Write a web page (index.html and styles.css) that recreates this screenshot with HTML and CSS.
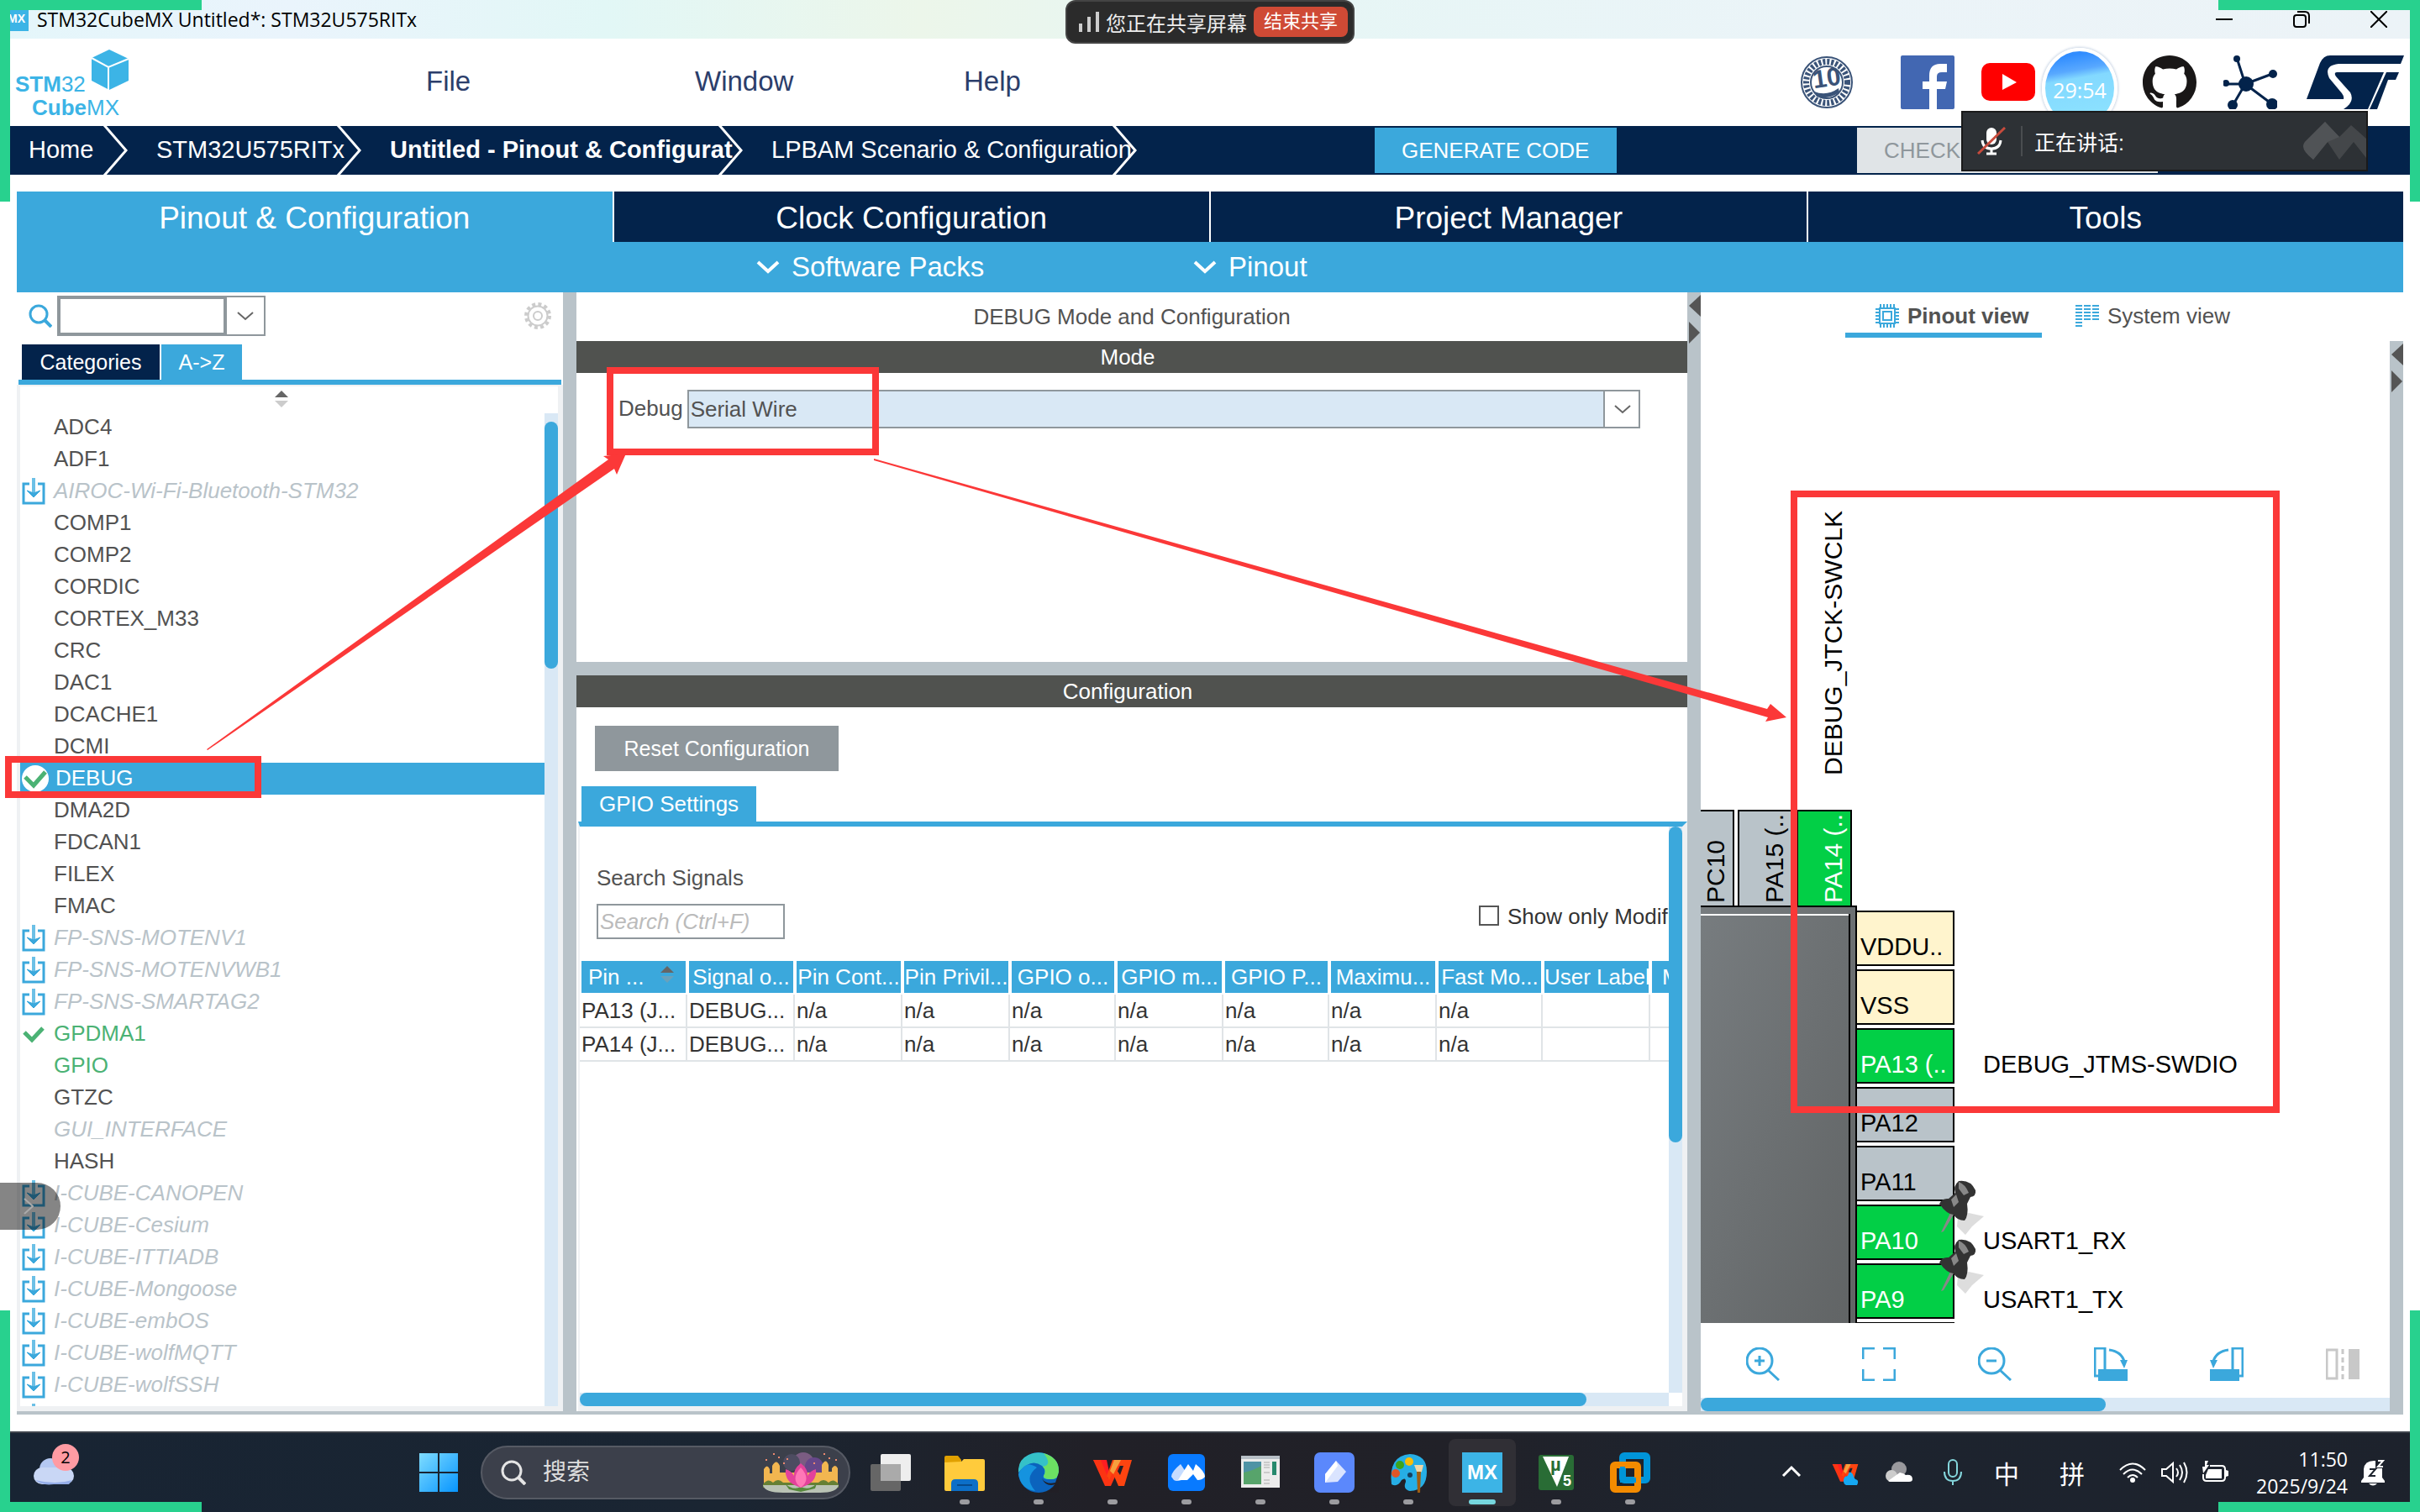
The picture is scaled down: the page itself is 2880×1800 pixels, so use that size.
FILE: index.html
```
<!DOCTYPE html>
<html lang="zh-CN">

<head>
    <meta charset="UTF-8">
    <meta name="viewport" content="width=device-width, initial-scale=1.0">
    <title>STM32CubeMX Untitled*: STM32U575RITx</title>
    <link rel="stylesheet" href="styles.css">
</head>

<body>
    <svg class="symbols" aria-hidden="true">
        <symbol id="download" viewBox="0 0 28 32">
            <path d="M9 7H2v23h24V7h-7" fill="none" stroke="#3ba8dc" stroke-width="3" />
            <path d="M14 0v20" stroke="#6cc0e6" stroke-width="4" />
            <path d="M6 15l8 8 8-8-8 3z" fill="#3ba8dc" stroke="#3ba8dc" />
        </symbol>
        <symbol id="check" viewBox="0 0 28 32">
            <path d="M3 14l9 9L25 9" fill="none" stroke="#4bb274" stroke-width="5" />
        </symbol>
        <symbol id="check-round" viewBox="0 0 32 34">
            <circle cx="16" cy="17" r="16" fill="#fff" />
            <path d="M4 15l10 10L28 9" fill="none" stroke="#4bb274" stroke-width="5" />
        </symbol>
        <symbol id="chevron" viewBox="0 0 30 58">
            <path d="M2-1l26 30L2 59" fill="none" stroke="#fff" stroke-width="3" />
        </symbol>
        <symbol id="down" viewBox="0 0 28 16">
            <path d="M2 2l12 11L26 2" fill="none" stroke="currentColor" stroke-width="4" />
        </symbol>
        <symbol id="down-thin" viewBox="0 0 20 12">
            <path d="M1 2l9 8 9-8" fill="none" stroke="#666" stroke-width="2" />
        </symbol>
        <symbol id="sort" viewBox="0 0 16 20">
            <path d="M8 0l8 8H0z" fill="#666" />
            <path d="M0 12h16l-8 8z" fill="#999" opacity=".5" />
        </symbol>
        <symbol id="split-arrows" viewBox="0 0 16 60">
            <path d="M16 0v26L2 13z" fill="#555" />
            <path d="M2 32v26l13-13z" fill="#555" />
        </symbol>
        <symbol id="pushpin" viewBox="0 0 54 66">
            <path d="M23 46l13-6 18 4-14 12-8 10-10-10z" fill="#bbb" opacity=".5" />
            <path d="M14 40l4 2-12 20-3 1z" fill="#888" />
            <path d="M24 2q14-2 20 11 1 7-6 8l-4 8q2 14-3 20-9 0-13-7-8 0-17-13 3-7 11-6l8-7q-3-8 4-14z" fill="#333" />
            <path d="M24 3q8 3 12 13l-6 3-6-8zM15 24l6-6 3 9-6 6z" fill="#888" />
        </symbol>
        <symbol id="wps" viewBox="0 0 48 48">
            <path d="M1 9h16l3 14-4 8z" fill="#ff1d22" />
            <path d="M1 9h9l9 22 8-22h9L22 40h-7z" fill="#fb3413" />
            <path d="M24 9h23l-9 31h-7l-7-16 3-6 6 9 4-11H28l-8 17-3-5z" fill="#fd4410" />
            <path d="M26 9h8l-9 17-4-4z" fill="#f6a03e" />
        </symbol>
    </svg>

    <div class="app">
        <header class="titlebar">
            <span class="app-icon">MX</span>
            <span class="title">STM32CubeMX Untitled*: STM32U575RITx</span>
            <div class="window-buttons">
                <button type="button" aria-label="Minimize"><svg viewBox="0 0 20 20"><path d="M0 10h20" stroke="#000" stroke-width="2" /></svg></button>
                <button type="button" aria-label="Restore"><svg viewBox="0 0 20 20"><rect x="1" y="5" width="14" height="14" rx="3" fill="none" stroke="#000" stroke-width="2" /><path d="M5 1h9q5 0 5 5v9" fill="none" stroke="#000" stroke-width="2" /></svg></button>
                <button type="button" aria-label="Close"><svg viewBox="0 0 20 20"><path d="M0 0l20 20M20 0L0 20" stroke="#000" stroke-width="2" /></svg></button>
            </div>
        </header>

        <nav class="menubar">
            <div class="logo">
                <div><b>STM</b>32</div>
                <div class="logo-line"><b>Cube</b>MX</div>
                <svg class="cube" viewBox="0 0 46 50">
                    <path d="M22 1L45 12v26L22 49 1 38V11z" fill="#3cb4e6" />
                    <path d="M1 11l20 11 24-10M21 22v27" fill="none" stroke="#fff" stroke-width="2" />
                </svg>
            </div>
            <div class="menus">
                <button type="button">File</button>
                <button type="button">Window</button>
                <button type="button">Help</button>
            </div>
            <div class="links">
                <a href="#" class="badge" aria-label="10 years">
                    <svg viewBox="0 0 64 64">
                        <circle cx="32" cy="32" r="30" fill="none" stroke="#3a5378" stroke-width="2" />
                        <circle cx="32" cy="32" r="24.500" fill="none" stroke="#3a5378" stroke-width="7" stroke-dasharray="3 2" />
                        <circle cx="32" cy="32" r="19" fill="none" stroke="#3a5378" stroke-width="2" />
                        <text x="16" y="37" class="ten" transform="rotate(-8 32 32)">10</text>
                        <path d="M17 43q15 6 29-4l1 5q-14 9-27 5z" fill="#3a5378" />
                    </svg>
                </a>
                <a href="#" class="facebook" aria-label="Facebook">
                    <svg viewBox="0 0 64 64">
                        <rect width="64" height="64" rx="2" fill="#4267b2" />
                        <path d="M34 64V40h-8v-9h8v-7q0-14 13-14h8v10h-6q-6 0-6 5v6h12l-2 9H43v24z" fill="#fff" />
                    </svg>
                </a>
                <a href="#" class="youtube" aria-label="YouTube">
                    <svg viewBox="0 0 64 64">
                        <rect y="9" width="64" height="45" rx="10" fill="#f00" />
                        <path d="M25 22l17 10-17 9z" fill="#fff" />
                    </svg>
                </a>
                <a href="#" class="github" aria-label="GitHub">
                    <svg viewBox="0 0 16 16">
                        <path fill="#191717" d="M8 0C3.580 0 0 3.580 0 8c0 3.540 2.290 6.530 5.470 7.590.4.070.55-.17.55-.38 0-.19-.01-.82-.01-1.490-2.010.37-2.530-.49-2.690-.94-.09-.23-.48-.94-.82-1.130-.28-.15-.68-.52-.01-.53.63-.01 1.080.58 1.230.82.72 1.210 1.870.87 2.330.66.07-.52.28-.87.51-1.070-1.780-.2-3.640-.89-3.640-3.950 0-.87.31-1.590.82-2.150-.08-.2-.36-1.020.08-2.120 0 0 .67-.21 2.200.82a7.600 7.600 0 014 0c1.530-1.040 2.200-.82 2.200-.82.44 1.100.16 1.920.08 2.120.51.56.82 1.270.82 2.150 0 3.070-1.870 3.750-3.650 3.950.29.25.54.73.54 1.480 0 1.070-.01 1.930-.01 2.200 0 .21.15.46.55.38A8 8 0 0016 8c0-4.420-3.580-8-8-8z" />
                    </svg>
                </a>
                <a href="#" class="community" aria-label="ST community">
                    <svg viewBox="0 0 64 64">
                        <path d="M26 34L16 3M26 34l32-12M26 34H3M26 34L12 58M26 34l32 24" stroke="#03234b" stroke-width="3" />
                        <g fill="#03234b">
                            <circle cx="27" cy="34" r="9" />
                            <circle cx="16" cy="4" r="4" />
                            <circle cx="59" cy="22" r="5" />
                            <circle cx="3" cy="33" r="4" />
                            <circle cx="11" cy="59" r="6" />
                            <circle cx="58" cy="58" r="7" />
                        </g>
                    </svg>
                </a>
                <a href="#" class="st" aria-label="STMicroelectronics">
                    <svg viewBox="0 0 116 64">
                        <path d="M28 0h88l-4 10H38q-18 2-11 17l15 18q3 4 2 7H0L16 9q4-9 12-9z" fill="#03234b" />
                        <path d="M36 20h56L73 64H44q14-9 8-20L35 25q-3-5 1-5z" fill="#03234b" />
                        <path d="M95 20h15l-4 9h-9L84 64h-9z" fill="#03234b" />
                    </svg>
                </a>
            </div>
        </nav>

        <nav class="breadcrumbs">
            <a href="#" class="crumb home">Home<svg><use href="#chevron" /></svg></a>
            <a href="#" class="crumb mcu">STM32U575RITx<svg><use href="#chevron" /></svg></a>
            <a href="#" class="crumb current">Untitled - Pinout &amp; Configurat<svg><use href="#chevron" /></svg></a>
            <a href="#" class="crumb lpbam">LPBAM Scenario &amp; Configuration<svg><use href="#chevron" /></svg></a>
            <button type="button" class="generate">GENERATE CODE</button>
            <button type="button" class="check-btn" disabled>CHECK</button>
        </nav>

        <nav class="main-tabs">
            <button type="button" class="active">Pinout &amp; Configuration</button>
            <button type="button">Clock Configuration</button>
            <button type="button">Project Manager</button>
            <button type="button">Tools</button>
        </nav>
        <div class="sub-tabs">
            <button type="button" class="packs"><svg><use href="#down" /></svg>Software Packs</button>
            <button type="button"><svg><use href="#down" /></svg>Pinout</button>
        </div>

        <main class="workspace">
            <aside class="sidebar">
                <div class="search-row">
                    <svg class="search-icon" viewBox="0 0 28 28">
                        <circle cx="12" cy="12" r="10" fill="none" stroke="#3ba8dc" stroke-width="3" />
                        <path d="M19 19l8 8" stroke="#3ba8dc" stroke-width="4" />
                    </svg>
                    <input type="text" aria-label="Search peripheral">
                    <button type="button" class="combo-btn" aria-label="Search history"><svg><use href="#down-thin" /></svg></button>
                    <button type="button" class="gear" aria-label="Settings">
                        <svg viewBox="0 0 32 32">
                            <circle cx="16" cy="16" r="14" fill="none" stroke="#ccc" stroke-width="4" stroke-dasharray="4 3.330" />
                            <circle cx="16" cy="16" r="11.500" fill="none" stroke="#ccc" stroke-width="2" />
                            <circle cx="16" cy="16" r="5" fill="none" stroke="#ccc" stroke-width="2" />
                        </svg>
                    </button>
                </div>
                <div class="side-tabs">
                    <button type="button" class="categories">Categories</button>
                    <button type="button" class="az">A-&gt;Z</button>
                </div>
                <div class="list-box">
                    <div class="list-head"><svg><use href="#sort" /></svg></div>
                    <div class="list-body">
                        <ul class="periph">
                            <li>ADC4</li>
                            <li>ADF1</li>
                            <li class="pack"><svg><use href="#download" /></svg>AIROC-Wi-Fi-Bluetooth-STM32</li>
                            <li>COMP1</li>
                            <li>COMP2</li>
                            <li>CORDIC</li>
                            <li>CORTEX_M33</li>
                            <li>CRC</li>
                            <li>DAC1</li>
                            <li>DCACHE1</li>
                            <li>DCMI</li>
                            <li class="selected"><svg><use href="#check-round" /></svg>DEBUG</li>
                            <li>DMA2D</li>
                            <li>FDCAN1</li>
                            <li>FILEX</li>
                            <li>FMAC</li>
                            <li class="pack"><svg><use href="#download" /></svg>FP-SNS-MOTENV1</li>
                            <li class="pack"><svg><use href="#download" /></svg>FP-SNS-MOTENVWB1</li>
                            <li class="pack"><svg><use href="#download" /></svg>FP-SNS-SMARTAG2</li>
                            <li class="used"><svg><use href="#check" /></svg>GPDMA1</li>
                            <li class="used">GPIO</li>
                            <li>GTZC</li>
                            <li class="pack">GUI_INTERFACE</li>
                            <li>HASH</li>
                            <li class="pack"><svg><use href="#download" /></svg>I-CUBE-CANOPEN</li>
                            <li class="pack"><svg><use href="#download" /></svg>I-CUBE-Cesium</li>
                            <li class="pack"><svg><use href="#download" /></svg>I-CUBE-ITTIADB</li>
                            <li class="pack"><svg><use href="#download" /></svg>I-CUBE-Mongoose</li>
                            <li class="pack"><svg><use href="#download" /></svg>I-CUBE-embOS</li>
                            <li class="pack"><svg><use href="#download" /></svg>I-CUBE-wolfMQTT</li>
                            <li class="pack"><svg><use href="#download" /></svg>I-CUBE-wolfSSH</li>
                            <li class="pack"><svg><use href="#download" /></svg></li>
                        </ul>
                        <div class="track"><div class="thumb list-thumb"></div></div>
                    </div>
                </div>
            </aside>

            <div class="splitter"></div>

            <section class="center">
                <h1>DEBUG Mode and Configuration</h1>
                <h2>Mode</h2>
                <div class="mode-panel">
                    <label for="debugMode">Debug</label>
                    <div class="select-wrap">
                        <select id="debugMode">
                            <option>Serial Wire</option>
                        </select>
                        <span class="select-arrow"><svg><use href="#down-thin" /></svg></span>
                    </div>
                </div>
                <div class="h-splitter"></div>
                <h2>Configuration</h2>
                <div class="config">
                    <button type="button" class="reset">Reset Configuration</button>
                    <button type="button" class="gpio-tab">GPIO Settings</button>
                    <div class="gpio-box">
                        <div class="gpio-content">
                            <label class="signals" for="signals">Search Signals</label>
                            <div class="filter-row">
                                <input type="text" id="signals" placeholder="Search (Ctrl+F)">
                                <label class="modified"><input type="checkbox">Show only Modified Pins</label>
                            </div>
                            <table>
                                <colgroup>
                                    <col><col><col><col><col class="narrow"><col><col class="narrow"><col><col class="narrow"><col><col>
                                </colgroup>
                                <thead>
                                    <tr>
                                        <th class="sorted">Pin ...<svg><use href="#sort" /></svg></th>
                                        <th>Signal o...</th>
                                        <th>Pin Cont...</th>
                                        <th>Pin Privil...</th>
                                        <th>GPIO o...</th>
                                        <th>GPIO m...</th>
                                        <th>GPIO P...</th>
                                        <th>Maximu...</th>
                                        <th>Fast Mo...</th>
                                        <th>User Label</th>
                                        <th class="last">Modified</th>
                                    </tr>
                                </thead>
                                <tbody>
                                    <tr>
                                        <td>PA13 (J...</td>
                                        <td>DEBUG...</td>
                                        <td>n/a</td>
                                        <td>n/a</td>
                                        <td>n/a</td>
                                        <td>n/a</td>
                                        <td>n/a</td>
                                        <td>n/a</td>
                                        <td>n/a</td>
                                        <td></td>
                                        <td></td>
                                    </tr>
                                    <tr>
                                        <td>PA14 (J...</td>
                                        <td>DEBUG...</td>
                                        <td>n/a</td>
                                        <td>n/a</td>
                                        <td>n/a</td>
                                        <td>n/a</td>
                                        <td>n/a</td>
                                        <td>n/a</td>
                                        <td>n/a</td>
                                        <td></td>
                                        <td></td>
                                    </tr>
                                </tbody>
                            </table>
                        </div>
                        <div class="track"><div class="thumb gpio-vthumb"></div></div>
                        <div class="track"><div class="thumb gpio-hthumb"></div></div>
                    </div>
                </div>
            </section>

            <div class="splitter"><svg><use href="#split-arrows" /></svg></div>

            <section class="pinout">
                <div class="view-tabs">
                    <button type="button" class="active">
                        <svg viewBox="0 0 28 28">
                            <path d="M6 0v28M10 0v28M14 0v28M18 0v28M22 0v28M0 6h28M0 10h28M0 14h28M0 18h28M0 22h28" stroke="#3ba8dc" stroke-width="2" />
                            <rect x="5" y="5" width="18" height="18" fill="#fff" stroke="#3ba8dc" stroke-width="2" />
                            <rect x="9" y="9" width="10" height="10" fill="none" stroke="#3ba8dc" stroke-width="2" />
                        </svg>
                        Pinout view
                    </button>
                    <button type="button">
                        <svg viewBox="0 0 28 28">
                            <path d="M4 1v26M14 1v18M24 1v18" stroke="#3ba8dc" stroke-width="8" stroke-dasharray="2 2" />
                        </svg>
                        System view
                    </button>
                </div>
                <div class="pinout-body">
                    <div class="pinout-main">
                        <div class="canvas">
                            <svg class="chip" viewBox="2024 406 820 1169">
                                <defs>
                                    <linearGradient id="chipBody" x1="0" y1="0" x2="1" y2="1">
                                        <stop offset="0" stop-color="#787d80" />
                                        <stop offset="1" stop-color="#606364" />
                                    </linearGradient>
                                </defs>
                                <rect x="1999" y="965" width="64" height="114" class="pin" />
                                <rect x="2069" y="965" width="64" height="114" class="pin" />
                                <rect x="2139" y="965" width="64" height="114" class="pin on" />
                                <rect x="2014" y="1079" width="195" height="520" fill="url(#chipBody)" stroke="#000" stroke-width="2" />
                                <path d="M2024 1089h176" stroke="#fff" stroke-width="2" />
                                <path d="M2201 1088v500" stroke="#000" stroke-width="2" />
                                <rect x="2209" y="1085" width="116" height="64" class="pin power" />
                                <rect x="2209" y="1155" width="116" height="64" class="pin power" />
                                <rect x="2209" y="1225" width="116" height="64" class="pin on" />
                                <rect x="2209" y="1295" width="116" height="64" class="pin" />
                                <rect x="2209" y="1365" width="116" height="64" class="pin" />
                                <rect x="2209" y="1435" width="116" height="64" class="pin on" />
                                <rect x="2209" y="1505" width="116" height="64" class="pin on" />
                                <path d="M2209 1575h117" stroke="#000" stroke-width="2" />
                                <g class="pin-text vertical">
                                    <text transform="translate(2052 1075) rotate(-90)">PC10</text>
                                    <text transform="translate(2122 1075) rotate(-90)">PA15 (..</text>
                                    <text transform="translate(2192 1075) rotate(-90)" class="light">PA14 (..</text>
                                    <text transform="translate(2192 923) rotate(-90)">DEBUG_JTCK-SWCLK</text>
                                </g>
                                <g class="pin-text">
                                    <text x="2214" y="1137">VDDU..</text>
                                    <text x="2214" y="1207">VSS</text>
                                    <text x="2214" y="1277" class="light">PA13 (..</text>
                                    <text x="2214" y="1347">PA12</text>
                                    <text x="2214" y="1417">PA11</text>
                                    <text x="2214" y="1487" class="light">PA10</text>
                                    <text x="2214" y="1557" class="light">PA9</text>
                                    <text x="2360" y="1277">DEBUG_JTMS-SWDIO</text>
                                    <text x="2360" y="1487">USART1_RX</text>
                                    <text x="2360" y="1557">USART1_TX</text>
                                </g>
                                <use href="#pushpin" x="2307" y="1404" width="54" height="66" />
                                <use href="#pushpin" x="2307" y="1474" width="54" height="66" />
                            </svg>
                        </div>
                        <div class="tools">
                            <button type="button" aria-label="Zoom in"><svg viewBox="0 0 40 40"><circle cx="16" cy="16" r="15" /><path d="M26 27l13 12M16 10v12M10 16h12" /></svg></button>
                            <button type="button" aria-label="Fit"><svg viewBox="0 0 40 40"><path d="M1 14V1h14M25 1h14v13M39 26v13H25M15 39H1V26" /></svg></button>
                            <button type="button" aria-label="Zoom out"><svg viewBox="0 0 40 40"><circle cx="16" cy="16" r="15" /><path d="M26 27l13 12M10 16h12" /></svg></button>
                            <button type="button" aria-label="Rotate right"><svg viewBox="0 0 40 40"><path d="M5 34H1V1h12v25M18 3q15 2 18 14" /><path d="M5 26h35v14H5zM31 15h9l-4 10z" class="fill" /></svg></button>
                            <button type="button" aria-label="Rotate left"><svg viewBox="0 0 40 40"><path d="M35 34h4V1H27v25M22 3Q7 5 4 17" /><path d="M0 26h35v14H0zM0 15h9L4 25z" class="fill" /></svg></button>
                            <button type="button" aria-label="Mirror" disabled><svg viewBox="0 0 40 40"><path d="M1 3h12v34H1z" /><path d="M20 2v36" stroke-dasharray="6 4" /><path d="M27 2h13v36H27z" class="fill" /></svg></button>
                        </div>
                        <div class="track"><div class="thumb pin-thumb"></div></div>
                    </div>
                    <div class="splitter"><svg><use href="#split-arrows" /></svg></div>
                </div>
            </section>
        </main>

        <footer class="taskbar">
            <button type="button" class="weather" aria-label="Weather">
                <svg viewBox="0 0 48 34">
                    <circle cx="20" cy="14" r="13" fill="#b4c8f2" />
                    <rect x="0" y="12" width="48" height="20" rx="10" fill="#c9d7f5" />
                    <path d="M2 27q8 7 22 5h18l4-5q-20 6-44 0z" fill="#95aee8" />
                </svg>
                <span class="count">2</span>
            </button>
            <button type="button" class="start" aria-label="Start">
                <svg viewBox="0 0 46 46">
                    <defs>
                        <linearGradient id="win" x1="0" y1="0" x2="1" y2="1">
                            <stop offset="0" stop-color="#7fdcff" />
                            <stop offset="1" stop-color="#0795ff" />
                        </linearGradient>
                    </defs>
                    <path d="M0 0h22v22H0zM24 0h22v22H24zM0 24h22v22H0zM24 24h22v22H24z" fill="url(#win)" />
                </svg>
            </button>
            <div class="task-search">
                <svg class="glass" viewBox="0 0 30 30">
                    <circle cx="13" cy="13" r="11" fill="none" stroke="#e4e4e4" stroke-width="3" />
                    <path d="M21 21l8 8" stroke="#e4e4e4" stroke-width="4" />
                </svg>
                <input type="text" placeholder="搜索" aria-label="搜索">
                <svg class="lotus" viewBox="0 0 90 48">
                    <circle cx="48" cy="13" r="13" fill="#7b5c82" />
                    <circle cx="34" cy="12" r="10" fill="#4d4c61" />
                    <circle cx="61" cy="17" r="11" fill="#664789" />
                    <path d="M1 38V20q4-7 7 0v5h3v-9q5-9 9 0v8h50v-9q5-9 8 0v8h4v-4q4-6 7 0v19H1z" fill="#f2b650" />
                    <path d="M0 38q6-8 12-2 6-6 12 0h42q6-6 12 0 6-6 12 2v4H0z" fill="#668034" />
                    <path d="M0 39h90q-2 9-22 9H24Q2 48 0 39z" fill="#bac3b5" />
                    <path d="M26 37q10 9 19 4 10 5 19-4l-2 6-17 4-14-3z" fill="#56883c" />
                    <path d="M45 42Q25 36 27 20q7 2 10 8-1-8 8-15 9 7 8 15 3-6 10-8 2 16-18 22z" fill="#e3429c" />
                    <path d="M45 42q-13-10 0-24 13 14 0 24z" fill="#ff77b7" />
                    <path d="M3 9h2M12 2h2M18 6h2M28 8h2M24 13h2M60 13h2M72 2h2M78 7h2M86 9h2" stroke="#ed896f" stroke-width="2" />
                </svg>
            </div>
            <div class="apps">
                <button type="button" aria-label="Task view"><svg viewBox="0 0 48 48"><rect x="0" y="14" width="36" height="32" rx="2" fill="#666" /><rect x="12" y="2" width="36" height="32" rx="2" fill="#eee" /><path d="M12 14h24v20H12z" fill="#aaa" /></svg></button>
                <button type="button" class="open" aria-label="Explorer"><svg viewBox="0 0 48 48"><path d="M0 6q0-2 2-2h14l4 5v5H0z" fill="#e0a000" /><path d="M0 12l20-1 3-3h23q2 0 2 2v34q0 2-2 2H2q-2 0-2-2z" fill="#ffcb3c" /><path d="M8 46V37q0-5 5-5h22q5 0 5 5v9z" fill="#0c6fc8" /><path d="M15 39h18" stroke="#064a8c" stroke-width="2" /></svg></button>
                <button type="button" class="open" aria-label="Edge"><svg viewBox="0 0 48 48"><circle cx="24" cy="24" r="24" fill="#0b63bd" /><path d="M0 24Q-1 9 12 3q8-4 18-2 18 5 18 21 0 10-9 10-11 0-9-4 4-7-2-12Q15 6 0 24z" fill="#35c1c8" /><path d="M30 1q18 5 18 21 0 10-9 10-9 0-9-4 4-6-1-11Q41 15 30 1z" fill="#6ce063" /><path d="M22 18q-16 12-2 28-17-2-20-20Q8 8 22 18z" fill="#1593df" /><path d="M28 31q5 8 16 5l4-12v24H34q9-4 10-10-11 4-16-7z" fill="#211f26" /></svg></button>
                <button type="button" class="open" aria-label="WPS"><svg viewBox="0 0 48 48"><use href="#wps" /></svg></button>
                <button type="button" class="open" aria-label="Tencent Meeting"><svg viewBox="0 0 48 48"><rect x="2" y="2" width="44" height="44" rx="6" fill="#087aff" /><path d="M6 29q0-6 11-15l10 15-9 4q-6 2-9 0z" fill="#c5dcff" /><path d="M14 33l12-19 6 8 3-8q11 9 11 15-3 4-9 4l-5-7-7 7z" fill="#fff" /></svg></button>
                <button type="button" class="open" aria-label="Viewer"><svg viewBox="0 0 48 48"><path d="M1 4h46v38H1z" fill="#ececec" /><path d="M1 4h46v4H1z" fill="#b7bfc6" /><path d="M4 11h21v27H4z" fill="#4f93a5" /><path d="M4 24q13-3 21-8v22H4z" fill="#57a46b" /><path d="M28 12h7M28 15h7M28 18h7M28 24h7M28 33h7M28 37h7" stroke="#aaa" /><path d="M38 11h5v16h-5z" fill="#26896d" /></svg></button>
                <button type="button" class="open" aria-label="Notes"><svg viewBox="0 0 48 48"><rect width="48" height="48" rx="7" fill="#5b88fc" /><path d="M26 10l12 13-10 12-15 1V26z" fill="#dae4ff" /><path d="M26 10L13 26v10l15-20z" fill="#fff" /></svg></button>
                <button type="button" class="open" aria-label="Paint"><svg viewBox="0 0 48 48"><path d="M26 2q20 1 20 21 0 22-20 23-9-2-5-11 0-6-5-2-5 9-12 5Q0 4 26 2z" fill="#26aee5" /><circle cx="25" cy="11" r="5" fill="#f9bd0a" /><circle cx="14" cy="15" r="5" fill="#3da51c" /><circle cx="9" cy="25" r="5" fill="#e05626" /><circle cx="26" cy="27" r="3" fill="#16405e" /><path d="M31 15h11l-2 8-3 2-3-2z" fill="#efd6a7" /><path d="M34 23h5l-1 25h-3z" fill="#9e5d12" /></svg></button>
                <button type="button" class="open current" aria-label="STM32CubeMX"><span class="mx">MX</span></button>
                <button type="button" class="open" aria-label="Keil"><svg viewBox="0 0 48 48"><rect x="3" y="3" width="42" height="42" rx="3" fill="#296c35" /><path d="M8 5h31L25 41z" fill="#fff" /><text x="17" y="22" class="mu">µ</text><text x="32" y="40" class="five">5</text></svg></button>
                <button type="button" class="open" aria-label="VMware"><svg viewBox="0 0 48 48"><rect x="15" y="4" width="29" height="29" rx="2" fill="none" stroke="#0095d9" stroke-width="8" /><rect x="4" y="15" width="29" height="29" rx="2" fill="none" stroke="#f38b00" stroke-width="8" /><path d="M15 17v16h16" fill="none" stroke="#0095d9" stroke-width="6" /></svg></button>
            </div>
            <div class="tray">
                <span><svg viewBox="0 0 32 32"><path d="M6 20l10-10 10 10" fill="none" stroke="#fff" stroke-width="3" /></svg></span>
                <span><svg viewBox="0 0 32 32"><use href="#wps" width="32" height="32" /><path d="M14 26q0-6 5-6 2-8 6-2 1 4 3 6 5 1 2 7H17q-3-1-3-5z" fill="#15a8f2" /></svg></span>
                <span><svg viewBox="0 0 32 32"><circle cx="16" cy="12" r="9" fill="#99999d" /><circle cx="7" cy="20" r="7" fill="#ccc" /><path d="M3 26l14-10q5 1 7 3 8-1 8 5 0 3-4 3H5z" fill="#fff" /></svg></span>
                <span><svg viewBox="0 0 32 32"><rect x="11" y="1" width="10" height="20" rx="5" fill="none" stroke="#84d6dc" stroke-width="2" /><path d="M6 15q0 11 10 11t10-11M16 26v5" fill="none" stroke="#84d6dc" stroke-width="2" /></svg></span>
                <span>中</span>
                <span class="pinyin">拼</span>
                <span class="wifi"><svg viewBox="0 0 32 32"><path d="M1 13q15-15 30 0M5 18q11-11 22 0M10 22q6-6 12 0" fill="none" stroke="#fff" stroke-width="2" /><circle cx="16" cy="25" r="3" fill="#fff" /></svg></span>
                <span class="small"><svg viewBox="0 0 32 32"><path d="M1 12h5l8-7v22l-8-7H1zM18 11q4 5 0 10M22 7q6 9 0 18M27 4q7 12 0 24" fill="none" stroke="#fff" stroke-width="2" /></svg></span>
                <span class="small"><svg viewBox="0 0 32 32"><path d="M10 8h14q4 0 4 4v10q0 4-4 4H6q-4 0-4-4v-4" fill="none" stroke="#fff" stroke-width="2" /><path d="M8 12h16v11H5v-4zM29 13l3 1v6l-3 1zM4 2v7H1l1 8 7-10H6l2-5z" fill="#fff" /></svg></span>
                <div class="clock">11:50<br>2025/9/24</div>
                <span class="bell"><svg viewBox="0 0 32 32"><path d="M5 22V12Q6 2 17 2h2v9h8v11l3 4v2H2v-2zM11 29h10q-5 5-10 0z" fill="#fff" /><path d="M12 12h7l-7 8h7" fill="none" stroke="#1d232d" stroke-width="2" /><path d="M22 2h6l-6 7h6" fill="none" stroke="#fff" stroke-width="2" /></svg></span>
            </div>
        </footer>
    </div>

    <!-- floating widgets above the window -->
    <div class="share-bar">
        <svg viewBox="0 0 24 24"><path d="M2 14v10M12 6v18M22 0v24" stroke="#ccc" stroke-width="4" /></svg>
        <span>您正在共享屏幕</span>
        <button type="button">结束共享</button>
    </div>
    <div class="timer">29:54</div>
    <div class="speaking">
        <svg class="mic" viewBox="0 0 34 34">
            <rect x="11" y="1" width="12" height="20" rx="6" fill="#fff" />
            <path d="M6 16q1 10 11 10t11-10M17 26v6M11 32h12" fill="none" stroke="#fff" stroke-width="3" />
            <path d="M1 32L33 1" stroke="#c74b3d" stroke-width="3" />
        </svg>
        <span>正在讲话:</span>
        <svg class="meeting" viewBox="0 0 76 46">
            <path d="M27 0L3 24q-6 8 10 21l17-21 14 21 17-21 15 19V20L58 4 44 18z" fill="#44474a" />
            <path d="M27 0l17 18-14 6-17 21Q-4 32 3 24z" fill="#505356" />
        </svg>
    </div>
    <button type="button" class="drawer" aria-label="Open drawer"><svg viewBox="0 0 12 20"><path d="M1 1l10 9-10 9" fill="none" stroke="#aaa" stroke-width="2" /></svg></button>
    <svg class="notes" viewBox="0 0 2880 1800">
        <g fill="none" stroke="#fb3838" stroke-width="8">
            <rect x="10" y="904" width="297" height="42" />
            <rect x="726" y="441" width="316" height="97" />
            <rect x="2135" y="588" width="574" height="733" />
        </g>
        <g fill="#fb3838">
            <path d="M246 892L724 547l-6-4 27-3-11 25-3-7L247 893z" />
            <path d="M1040 546L2103 844l4-6 19 16-25 5 3-5L1040 548z" />
        </g>
    </svg>
    <div class="corner top-left"></div>
    <div class="corner top-right"></div>
    <div class="corner bottom-left"></div>
    <div class="corner bottom-right"></div>
</body>

</html>
```

FILE: styles.css
```
* {
    box-sizing: border-box;
}

body {
    margin: 0;
    font-family: "Liberation Sans", "Noto Sans CJK SC", sans-serif;
    font-size: 26px;
    color: #525252;
    background-color: white;
    overflow: hidden;
}

button,
input,
select {
    font: inherit;
    color: inherit;
    margin: 0;
    padding: 0;
    border: none;
    border-radius: 0;
    background: none;
    outline: none;
}

svg {
    display: block;
    flex-shrink: 0;
}

a {
    color: inherit;
    text-decoration: none;
}

.symbols {
    position: absolute;
    width: 0;
    height: 0;
}

.app {
    height: 100vh;
    display: flex;
    flex-direction: column;
}

/* title bar */
.titlebar {
    flex: 0 0 46px;
    display: flex;
    align-items: center;
    padding: 0 34px 0 0;
    background: linear-gradient(90deg, #e4f6fa, #eaf4fc 12%, #e2f7f6 25%, #ecf6ea 38%, #e6f6f5 52%, #ebf4f8 75%, #ecf3f7);
}

.app-icon {
    width: 34px;
    height: 28px;
    background-color: #3cb4e6;
    color: white;
    font-weight: bold;
    font-size: 14px;
    line-height: 26px;
    text-align: right;
    padding-right: 4px;
}

.title {
    font-family: "Open Sans", sans-serif;
    font-size: 23px;
    color: black;
    padding-left: 10px;
}

.window-buttons {
    display: flex;
    gap: 72px;
    margin-left: auto;
    padding-right: 5px;
}

.window-buttons svg {
    width: 20px;
    height: 20px;
}

/* menu bar */
.menubar {
    flex: 0 0 104px;
    display: flex;
    padding-left: 18px;
}

.logo {
    position: relative;
    width: 489px;
    padding-top: 40px;
    color: #3cb4e6;
    line-height: 28px;
}

.logo-line {
    padding-left: 20px;
}

.cube {
    position: absolute;
    left: 90px;
    top: 12px;
    width: 46px;
    height: 50px;
}

.menus {
    display: flex;
}

.menus button {
    width: 320px;
    height: 102px;
    font-size: 33px;
    color: #2c3e6b;
    text-align: left;
}

.links {
    display: flex;
    margin-left: auto;
    padding: 20px 16px 0 0;
}

.links svg {
    width: 64px;
    height: 64px;
}

.badge {
    margin-right: 56px;
}

.facebook,
.community {
    margin-right: 32px;
}

.youtube {
    margin-right: 128px;
}

.github {
    margin-right: 32px;
}

.links .st svg {
    width: 122px;
}

.ten {
    font-size: 30px;
    font-weight: bold;
    fill: #3a5378;
}

/* breadcrumbs */
.breadcrumbs {
    flex: 0 0 58px;
    display: flex;
    align-items: center;
    margin: 0 12px;
    background-color: #03234b;
    color: white;
    font-size: 29px;
}

.crumb {
    position: relative;
    height: 58px;
    line-height: 56px;
    padding-left: 34px;
    white-space: nowrap;
}

.crumb svg {
    position: absolute;
    right: 0;
    top: 0;
    width: 30px;
    height: 58px;
}

.home {
    width: 140px;
    padding-left: 22px;
}

.mcu {
    width: 278px;
}

.current {
    width: 454px;
    font-weight: bold;
}

.lpbam {
    width: 469px;
}

.generate,
.check-btn {
    height: 54px;
    font-size: 26px;
    text-align: left;
    padding-left: 32px;
}

.generate {
    width: 288px;
    margin-left: 283px;
    background-color: #3ba8dc;
}

.check-btn {
    width: 358px;
    margin-left: 286px;
    background-color: #e0e4e7;
    color: #8f979c;
}

/* main tabs */
.main-tabs {
    flex: 0 0 60px;
    display: flex;
    gap: 2px;
    margin: 20px 20px 0;
}

.main-tabs button {
    flex: 1;
    padding-top: 3px;
    background-color: #03234b;
    color: white;
    font-size: 37px;
}

.main-tabs .active {
    background-color: #3ba8dc;
}

.sub-tabs {
    flex: 0 0 60px;
    display: flex;
    margin: 0 20px;
    padding-left: 880px;
    background-color: #3ba8dc;
    color: white;
    font-size: 33px;
}

.sub-tabs button {
    display: flex;
    align-items: center;
}

.packs {
    width: 520px;
}

.sub-tabs svg {
    width: 28px;
    height: 16px;
    margin-right: 14px;
}

/* workspace */
.workspace {
    flex: 1;
    min-height: 0;
    display: flex;
    margin: 0 20px 20px;
    border-bottom: 4px solid #b9c3c9;
}

.splitter {
    flex: 0 0 16px;
    background-color: #b9c3c9;
    padding-top: 3px;
}

.splitter svg {
    width: 16px;
    height: 60px;
}

.track {
    background-color: #d9e8f5;
}

.thumb {
    background-color: #3ba8dc;
    border-radius: 8px;
}

.sidebar {
    flex: 0 0 650px;
    display: flex;
    flex-direction: column;
}

.search-row {
    display: flex;
    align-items: center;
    height: 62px;
    padding: 0 14px 6px;
}

.search-icon {
    width: 28px;
    height: 28px;
    margin-right: 6px;
}

.search-row input {
    width: 202px;
    height: 48px;
    border: 4px solid #8f979c;
    padding: 0 4px;
}

.combo-btn {
    width: 46px;
    height: 48px;
    border: 2px solid #8f979c;
    border-left: none;
    padding-left: 12px;
}

.combo-btn svg,
.select-arrow svg {
    width: 20px;
    height: 12px;
}

.gear {
    margin-left: auto;
}

.gear svg {
    width: 32px;
    height: 32px;
}

.side-tabs {
    display: flex;
    gap: 2px;
    margin: 0 2px;
    padding-left: 4px;
    border-bottom: 6px solid #3ba8dc;
}

.side-tabs button {
    height: 42px;
    font-size: 25px;
    color: white;
}

.categories {
    width: 164px;
    background-color: #03234b;
}

.az {
    width: 96px;
    background-color: #3ba8dc;
}

.list-box {
    flex: 1;
    min-height: 0;
    display: flex;
    flex-direction: column;
    border: solid #eff1f3;
    border-width: 2px 6px 6px 4px;
}

.list-head {
    display: flex;
    justify-content: center;
    height: 30px;
    padding: 5px 18px 0 0;
}

.list-head svg {
    width: 16px;
    height: 20px;
}

.list-body {
    flex: 1;
    min-height: 0;
    display: flex;
}

.list-body .track {
    width: 16px;
    margin-top: 2px;
    padding-top: 10px;
}

.list-thumb {
    height: 294px;
}

.periph {
    flex: 1;
    margin: 0;
    padding: 0;
    list-style: none;
    overflow: hidden;
}

.periph li {
    position: relative;
    height: 38px;
    line-height: 36px;
    padding-left: 40px;
}

.periph svg {
    position: absolute;
    left: 2px;
    top: 3px;
    width: 28px;
    height: 32px;
}

.periph .pack {
    font-style: italic;
    color: #b9c3c9;
}

.periph .used {
    color: #4bb274;
}

.periph .selected {
    background-color: #3ba8dc;
    color: white;
    padding-left: 42px;
}

.periph .selected svg {
    width: 32px;
    height: 34px;
    top: 2px;
}

/* mode and configuration */
.center {
    flex: 1;
    min-width: 0;
    display: flex;
    flex-direction: column;
}

h1,
h2 {
    margin: 0;
    font-size: 26px;
    font-weight: normal;
    text-align: center;
}

h1 {
    flex: 0 0 58px;
    line-height: 58px;
}

h2 {
    flex: 0 0 38px;
    line-height: 38px;
    padding-right: 10px;
    background-color: #50524f;
    color: white;
}

.mode-panel {
    flex: 0 0 344px;
    display: flex;
    align-items: flex-start;
    gap: 5px;
    padding: 20px 56px 0 50px;
}

.mode-panel label {
    line-height: 44px;
}

.select-wrap {
    position: relative;
    flex: 1;
    height: 46px;
}

.select-wrap select {
    width: 100%;
    height: 46px;
    appearance: none;
    border: 2px solid #8f979c;
    background-color: #d9e8f5;
    padding: 0 2px;
}

.select-arrow {
    position: absolute;
    right: 2px;
    top: 2px;
    width: 42px;
    height: 42px;
    padding: 15px 11px;
    border-left: 2px solid #8f979c;
    background-color: white;
    pointer-events: none;
}

.h-splitter {
    flex: 0 0 16px;
    background-color: #b9c3c9;
}

.config {
    flex: 1;
    min-height: 0;
    display: flex;
    flex-direction: column;
    align-items: flex-start;
    padding-top: 22px;
}

.reset {
    width: 290px;
    height: 54px;
    margin-left: 22px;
    background-color: #8f979c;
    color: white;
    font-size: 25px;
}

.gpio-tab {
    width: 208px;
    height: 42px;
    margin: 18px 0 0 6px;
    background-color: #3ba8dc;
    color: white;
}

.gpio-box {
    flex: 1;
    min-height: 0;
    align-self: stretch;
    display: grid;
    grid-template-columns: 1fr 16px;
    grid-template-rows: 1fr 16px;
    margin-left: 2px;
    border: solid #eff1f3;
    border-width: 0 6px 6px 2px;
    border-top: 6px solid #3ba8dc;
}

.gpio-content {
    min-width: 0;
    overflow: hidden;
    padding-top: 46px;
}

.signals {
    display: block;
    line-height: 30px;
    padding-left: 20px;
}

.filter-row {
    display: flex;
    padding-left: 20px;
    margin: 16px 0 26px;
}

.filter-row input[type="text"] {
    width: 224px;
    height: 42px;
    border: 2px solid #8f979c;
    padding: 0 2px;
}

.filter-row ::placeholder {
    color: #bbb;
    font-style: italic;
}

.modified {
    display: flex;
    width: 226px;
    margin-left: auto;
    overflow: hidden;
    white-space: nowrap;
    line-height: 30px;
    color: #333;
}

.modified input {
    flex: 0 0 24px;
    height: 24px;
    margin: 2px 10px 0 0;
    appearance: none;
    border: 2px solid #555;
}

.gpio-vthumb {
    height: 376px;
}

.gpio-hthumb {
    width: 1198px;
    height: 16px;
}

table {
    width: 1402px;
    table-layout: fixed;
    border-collapse: separate;
    border-spacing: 0;
    color: #333;
}

col {
    width: 128px;
}

.narrow {
    width: 126px;
}

th {
    height: 40px;
    padding: 0;
    border: solid white;
    border-width: 0 2px 2px;
    background-color: #3ba8dc;
    background-clip: padding-box;
    color: white;
    font-weight: normal;
    white-space: nowrap;
    line-height: 38px;
}

.sorted {
    text-align: left;
    padding-left: 8px;
}

.sorted svg {
    display: inline-block;
    width: 16px;
    height: 24px;
    margin-left: 20px;
}

.last {
    text-align: left;
    padding-left: 12px;
}

td {
    height: 40px;
    padding: 0 0 0 2px;
    border: solid #e0e4e7;
    border-width: 0 2px 2px 0;
    white-space: nowrap;
    line-height: 38px;
}

/* pinout view */
.pinout {
    flex: 0 0 836px;
    display: flex;
    flex-direction: column;
}

.view-tabs {
    flex: 0 0 58px;
    display: flex;
    gap: 28px;
    padding-left: 172px;
}

.view-tabs button {
    display: flex;
    align-items: center;
    gap: 10px;
    height: 54px;
    padding: 8px 10px 0 12px;
    border-bottom: 6px solid transparent;
}

.view-tabs .active {
    width: 234px;
    padding-left: 36px;
    border-color: #3ba8dc;
    font-weight: bold;
}

.view-tabs svg {
    width: 28px;
    height: 28px;
}

.pinout-body {
    flex: 1;
    min-height: 0;
    display: flex;
}

.pinout-main {
    flex: 1;
    display: flex;
    flex-direction: column;
}

.canvas {
    flex: 1;
    min-height: 0;
    overflow: hidden;
}

.chip {
    width: 820px;
    height: 1169px;
}

.pin {
    fill: #b9c3c9;
    stroke: black;
    stroke-width: 2px;
}

.on {
    fill: #02cf46;
}

.power {
    fill: #fff4cd;
}

.pin-text {
    font-size: 29px;
    fill: black;
}

.vertical {
    font-size: 30px;
}

.light {
    fill: white;
}

.tools {
    flex: 0 0 88px;
    display: flex;
    gap: 98px;
    padding: 8px 0 0 54px;
}

.tools svg {
    width: 40px;
    height: 40px;
    fill: none;
    stroke: #3ba8dc;
    stroke-width: 3px;
}

.tools .fill {
    fill: #3ba8dc;
    stroke: none;
}

.tools button:disabled svg {
    stroke: #c8c8c8;
}

.tools button:disabled .fill {
    fill: #c8c8c8;
}

.pin-thumb {
    width: 482px;
    height: 16px;
}

/* taskbar */
.taskbar {
    flex: 0 0 96px;
    display: flex;
    align-items: center;
    border-top: 2px solid #3f444c;
    background: linear-gradient(90deg, #182433, #1a2532 30%, #212027 45%, #212128 60%, #1d242f 72%, #1d222c);
    color: white;
}

.weather {
    position: relative;
    width: 499px;
    padding: 8px 0 10px 40px;
}

.weather svg {
    width: 48px;
    height: 34px;
}

.count {
    position: absolute;
    left: 62px;
    top: -8px;
    width: 32px;
    height: 32px;
    border-radius: 50%;
    background-color: #ff9ba3;
    color: black;
    font-family: "Open Sans", sans-serif;
    font-size: 20px;
    line-height: 32px;
}

.start svg {
    width: 46px;
    height: 46px;
}

.task-search {
    display: flex;
    align-items: center;
    width: 440px;
    height: 64px;
    margin-left: 27px;
    padding: 0 12px 0 22px;
    border: 2px solid #565a64;
    border-radius: 32px;
    background-color: #3c404b;
}

.glass {
    width: 30px;
    height: 30px;
    margin-right: 20px;
}

.task-search input {
    flex: 1;
    min-width: 0;
    font-size: 28px;
}

.task-search ::placeholder {
    color: #ddd;
}

.lotus {
    width: 90px;
    height: 48px;
}

.apps {
    display: flex;
    gap: 8px;
    margin-left: 8px;
}

.apps button {
    position: relative;
    width: 80px;
    height: 80px;
    display: flex;
    justify-content: center;
    align-items: center;
}

.apps svg {
    width: 48px;
    height: 48px;
}

.open::after {
    content: "";
    position: absolute;
    left: 34px;
    bottom: 2px;
    width: 12px;
    height: 6px;
    border-radius: 3px;
    background-color: #9c9ca0;
}

.apps .current {
    width: 80px;
    border-radius: 8px;
    background-color: #302f35;
}

.apps .current::after {
    left: 24px;
    width: 32px;
    background-color: #76d6de;
}

.mx {
    width: 48px;
    height: 48px;
    background-color: #3cb4e6;
    font-weight: bold;
    font-size: 24px;
    line-height: 48px;
    color: white;
}

.mu,
.five {
    font-weight: bold;
    font-size: 22px;
    fill: #296c35;
}

.five {
    font-size: 18px;
    fill: white;
}

.tray {
    display: flex;
    align-items: center;
    margin-left: auto;
    padding-right: 26px;
    font-size: 30px;
}

.tray span {
    width: 64px;
    display: flex;
    justify-content: center;
}

.tray svg {
    width: 32px;
    height: 32px;
}

.tray .pinyin {
    width: 92px;
}

.tray .wifi {
    width: 52px;
}

.tray .small {
    width: 48px;
}

.clock {
    width: 134px;
    text-align: right;
    font-family: "Open Sans", sans-serif;
    font-size: 23px;
    line-height: 32px;
}

.tray .bell {
    width: 60px;
}

/* floating widgets */
.share-bar {
    position: absolute;
    left: 1268px;
    top: 0;
    display: flex;
    align-items: center;
    height: 52px;
    padding: 0 6px 0 14px;
    border: 2px solid #444;
    border-radius: 12px;
    background-color: #2b2b2b;
    color: #eee;
    font-size: 24px;
}

.share-bar svg {
    width: 24px;
    height: 24px;
    margin-right: 8px;
}

.share-bar button {
    width: 112px;
    height: 36px;
    margin-left: 8px;
    border-radius: 8px;
    background-color: #cf4a35;
    color: white;
    font-size: 22px;
    line-height: 36px;
}

.timer {
    position: absolute;
    left: 2430px;
    top: 57px;
    width: 90px;
    height: 96px;
    border: 4px solid white;
    border-radius: 50%;
    box-shadow: 0 0 3px 1px #c9d5e4;
    background: linear-gradient(170deg, #318dff 10%, #58a8ff 28%, #83d9ff 38%, #8fe4ff);
    color: white;
    font-family: "Open Sans", sans-serif;
    font-size: 25px;
    line-height: 92px;
    text-align: center;
}

.speaking {
    position: absolute;
    left: 2334px;
    top: 132px;
    display: flex;
    align-items: center;
    width: 484px;
    height: 72px;
    padding-left: 17px;
    border: 2px solid #1a1a1a;
    background-color: #2d3135;
    color: white;
    font-size: 25px;
}

.speaking span {
    margin-left: 18px;
    padding-left: 14px;
    border-left: 2px solid #4a4d50;
}

.mic {
    width: 34px;
    height: 34px;
}

.meeting {
    width: 76px;
    height: 46px;
    margin-left: auto;
}

.drawer {
    position: absolute;
    left: 0;
    top: 1408px;
    width: 72px;
    height: 56px;
    padding-left: 28px;
    border-radius: 0 28px 28px 0;
    background-color: rgba(0, 0, 0, 0.48);
}

.drawer svg {
    width: 12px;
    height: 20px;
}

.notes {
    position: absolute;
    left: 0;
    top: 0;
    width: 2880px;
    height: 1800px;
    pointer-events: none;
}

/* green frame shown while the screen is shared */
.corner {
    position: fixed;
    width: 240px;
    height: 240px;
    border: 0 solid #28d18e;
    pointer-events: none;
}

.top-left {
    left: 0;
    top: 0;
    border-width: 12px 0 0 12px;
}

.top-right {
    right: 0;
    top: 0;
    border-width: 12px 12px 0 0;
}

.bottom-left {
    left: 0;
    bottom: 0;
    border-width: 0 0 12px 12px;
}

.bottom-right {
    right: 0;
    bottom: 0;
    border-width: 0 12px 12px 0;
}
```
